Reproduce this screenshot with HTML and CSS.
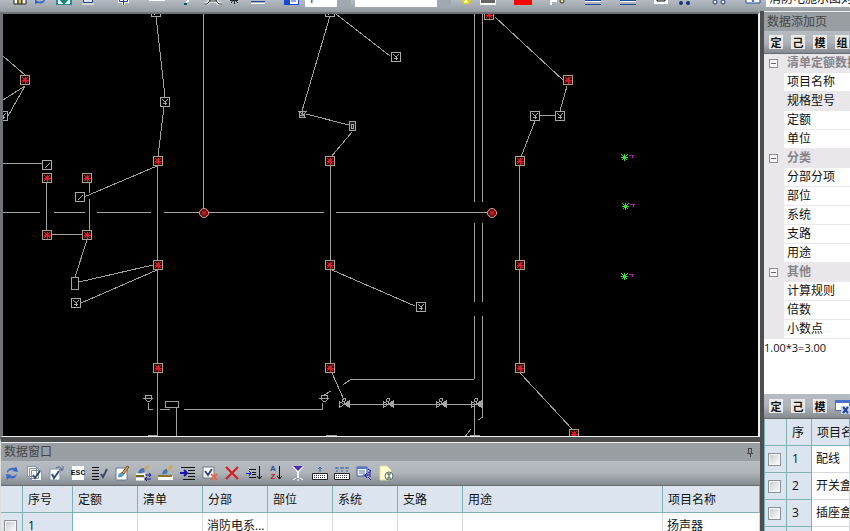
FILE: index.html
```html
<!DOCTYPE html>
<html lang="zh-CN">
<head>
<meta charset="utf-8">
<title>数据窗口</title>
<link rel="stylesheet" href="styles.css">
</head>
<body>
<header class="topbar">
 <div class="ribbon">
  <button aria-label="图库"><svg viewBox="0 0 18 16"><path d="M3 4h4v11H3z" fill="#fff" stroke="#222"/><path d="M7 4h4v11H7z" fill="#e2b64a" stroke="#222"/><path d="M11 4h4v11h-4z" fill="#fff" stroke="#222"/></svg></button>
  <button aria-label="刷新"><svg viewBox="0 0 18 16"><path d="M4 15V9l2 3q5 2 9-3-2 7-8 5z" fill="#3262c4"/></svg></button>
  <button aria-label="导入"><svg viewBox="0 0 18 16"><path d="M2 2h14v14H2z" fill="#e6ffff" stroke="#248d98" stroke-width="2"/><path d="M9 5v8M5 10l4 4 4-4" fill="none" stroke="#13806f" stroke-width="2"/></svg></button>
  <button aria-label="矩形"><svg viewBox="0 0 18 16"><path d="M4.500 3.500h9v10h-9z" fill="#dce6f4" stroke="#244284"/><path d="M3 15h12" stroke="#fff"/></svg></button>
  <button aria-label="中点"><svg viewBox="0 0 18 16"><path d="M5.500 6v6.500h8V6M9.500 4v12" fill="none" stroke="#fff" stroke-width="3"/><path d="M5.500 6v6.500h8V6M9.500 4v12" fill="none" stroke="#244284"/></svg></button>
  <button aria-label="直线"><svg viewBox="0 0 18 16"><path d="M1 11h16" stroke="#fff" stroke-width="2"/></svg></button>
  <button aria-label="帮助"><svg viewBox="0 0 18 16"><path d="M11 5v7l-2 1" stroke="#fff" stroke-width="2" fill="none"/><path d="M7 14h3v2H7z" fill="#174f60"/></svg></button>
  <button aria-label="连接"><svg viewBox="0 0 18 16"><path d="M9 8L3 15H0M9 8l6 7h3M5 12h8" fill="none" stroke="#fff" stroke-width="3"/><path d="M9 8L3 15H0M9 8l6 7h3M5 12h8" fill="none" stroke="#222"/></svg></button>
  <button aria-label="节点"><svg viewBox="0 0 18 16"><path d="M9.500 5v10M6 14l3-4 4 4M5 11.500h8" fill="none" stroke="#222"/></svg></button>
  <button aria-label="线型"><svg viewBox="0 0 18 16"><path d="M2 12.500h14" stroke="#214b95"/><path d="M2 14.500h14" stroke="#fff"/></svg></button>
  <button aria-label="图层"><svg viewBox="0 0 18 16"><path d="M2 0h15v16H2z" fill="#1448dc"/><path d="M8 0h8v15H8z" fill="#fff"/><path d="M9 12h5" stroke="#1448dc"/></svg></button>
  <select class="combo" aria-label="比例"><option>1</option></select>
  <select class="combo combo-wide" aria-label="样式"><option></option></select>
  <button aria-label="灯"><svg viewBox="0 0 18 16"><path d="M5 9q5-5 9 0v4q-5 5-9 0z" fill="#d8cf37"/><path d="M7 13h4M9 9v3" stroke="#fff49b" stroke-width="2"/></svg></button>
  <button aria-label="线宽"><svg viewBox="0 0 18 16"><path d="M1 4h16v12H1z" fill="#fff"/><path d="M2 6h14v8H2z" fill="#666"/></svg></button>
  <button aria-label="颜色"><svg viewBox="0 0 20 16" preserveAspectRatio="none"><path d="M0 0h20v16H0z" fill="#f00"/></svg></button>
  <button aria-label="标注"><svg viewBox="0 0 18 16"><path d="M4 16v-4h5V7" fill="none" stroke="#fff" stroke-width="2"/><circle cx="15" cy="12" r="2" fill="#e5db90" stroke="#332b15"/></svg></button>
  <button aria-label="双线"><svg viewBox="0 0 18 16"><path d="M1 11.500h16M1 15.500h16" stroke="#214b95"/><path d="M1 12.500h16" stroke="#fff"/></svg></button>
  <button aria-label="平行线"><svg viewBox="0 0 18 16"><path d="M1 11.500h16M1 15.500h16" stroke="#214b95"/><path d="M1 12.500h16" stroke="#fff"/></svg></button>
  <button aria-label="框选"><svg viewBox="0 0 18 16"><path d="M2 4h14v11H2z" fill="#fff"/><path d="M5 5h8v7H5z" fill="#ddd" stroke="#111"/></svg></button>
  <button aria-label="阵列"><svg viewBox="0 0 18 16" fill="#fff" stroke="#152f80" stroke-width="2"><circle cx="5" cy="9" r="1"/><circle cx="5" cy="14" r="1"/><circle cx="12" cy="9" r="1"/><circle cx="12" cy="14" r="1"/></svg></button>
  <button aria-label="端点"><svg viewBox="0 0 18 16" fill="#fff" stroke="#152f80"><circle cx="5" cy="13" r="2"/><circle cx="13" cy="13" r="2"/></svg></button>
  <button aria-label="展开"><svg viewBox="0 0 18 16"><path d="M2 3h14v11H2z" fill="#fff" stroke="#234d9b"/><path d="M7 9l2 4 2-4" fill="none" stroke="#234d9b"/></svg></button>
  <select class="combo combo-view" aria-label="图纸"><option>消防电施示图对</option></select>
 </div>
</header>
<div class="workspace">
  <main class="left">
    <section class="canvas" aria-label="图纸">
      <svg viewBox="3 14 755 422" preserveAspectRatio="xMinYMin slice" shape-rendering="crispEdges">
        <defs>
          <g id="star" fill="none"><path d="M-3 .500H4M.5-3V4M-2.500-2.500l6 6M3.500-2.500l-6 6"/></g>
          <g id="red"><path d="M-4.500-4.500h9v9h-9z" fill="#250000" stroke="#aaa593"/><path d="M-2-2h4v4h-4z" fill="#9c1820"/><path d="M-3 .500H4M.5-3V4M-3-3l6 6M3-3l-6 6" stroke="#e21e2b"/></g>
          <g id="ring"><circle r="4.500" fill="#420608" stroke="#d8aaa1"/><path d="M-3 0H3M0-3V3M-3-3l6 6M3-3l-6 6" stroke="#d62027"/></g>
          <g id="ybox" fill="#000" stroke="#aaa"><path d="M-4.500-4.500h9v9h-9z"/><path d="M-3-3L0 0L3-3M0 0v3M-2 1h4" fill="none"/></g>
          <g id="sbox" fill="#000" stroke="#aaa"><path d="M-4.500-4.500h9v9h-9z"/><path d="M-2 3L3-2"/></g>
          <g id="valve" stroke="#a5a5a5" fill="none"><path d="M-4.500-2.500v6L0 .500zM0-2v2"/><path d="M5-3v6L0 0z" fill="#a5a5a5"/><circle cx="0" cy="-4" r="1.500"/></g>
        </defs>
        <g fill="none" stroke="#a2a2a2">
          <path d="M3 56L25 75M25 86L3 100M25 86L8 116M156 16l9 81M164 107l-6 49M157 166L84 197M157.500 166V436M3 163.500h40M46.500 183v47M89.500 183v10M89.500 199v31M51 234.500h31M87 240l-12 37M79 282l74-17M81 303l76-33"/>
          <path d="M3 212.500h37M54 212.500h31M97 212.500h54M164 212.500h160M336 212.500h151M203.500 14v194"/>
          <path d="M330 16l-28 95M336 14l54 42M306 114l43 11M352 132l-21 25M330.500 166V363M332 270l83 36M332 373l12 27M474.500 14v188M482.500 14v188M474.500 223v79M482.500 223v79M474.500 316v63M482.500 316v101l-4 3M474 379.500H351l-8 5M344 404.500h131M474.500 404v32M471 429l-6 8"/>
          <path d="M495 17l68 63M567 86l-7 25M540 115.500h15M535 121l-14 36M519.500 166V363M520 373l53 57"/>
          <path d="M148.500 403v6h4M160 409.500h10M184 409.500h138v-7M324 395l7-4M176.500 408v28M148 435.500h9M326 435.500h11M470 435.500h10"/>
          <path d="M165.500 401.500h13v6h-13zM71.500 277.500h7v12h-7z" fill="#000"/>
          <path d="M145.500 395.500h6v4l-2 2h-2l-2-2zM143 398.500h10M321.500 395.500h6v4l-2 2h-2l-2-2zM319 398.500h10"/>
          <path d="M349.500 121.500h6v9h-6zM351.500 124.500h2v4h-2zM298 111.500h8l-2 3 1 3h-6v-6l6 5-3-4M300 115h5" fill="#222"/>
        </g>
        <use href="#sbox" x="156" y="12"/><use href="#sbox" x="330" y="12"/><use href="#sbox" x="47" y="165"/><use href="#sbox" x="80" y="197"/>
        <use href="#ybox" x="165" y="102"/><use href="#ybox" x="3" y="116"/><use href="#ybox" x="396" y="57"/><use href="#ybox" x="535" y="116"/><use href="#ybox" x="560" y="116"/><use href="#ybox" x="421" y="307"/><use href="#ybox" x="76" y="303"/>
        <use href="#red" x="25" y="80"/><use href="#red" x="158" y="161"/><use href="#red" x="47" y="178"/><use href="#red" x="87" y="178"/><use href="#red" x="47" y="235"/><use href="#red" x="87" y="235"/><use href="#red" x="158" y="265"/><use href="#red" x="158" y="368"/><use href="#red" x="330" y="161"/><use href="#red" x="330" y="265"/><use href="#red" x="330" y="368"/><use href="#red" x="489" y="15"/><use href="#red" x="568" y="80"/><use href="#red" x="520" y="161"/><use href="#red" x="520" y="265"/><use href="#red" x="520" y="368"/><use href="#red" x="574" y="434"/>
        <g shape-rendering="auto"><use href="#ring" x="204" y="213"/><use href="#ring" x="492" y="213"/></g>
        <use href="#valve" x="344" y="404"/><use href="#valve" x="388" y="404"/><use href="#valve" x="441" y="404"/><use href="#valve" x="476" y="404"/>
        <g stroke="#43d84b"><use href="#star" x="624" y="157"/><use href="#star" x="625" y="206"/><use href="#star" x="624" y="276"/></g>
        <path d="M629 155.500h5M632 156v2M630 204.500h5M633 205v2M629 274.500h5M632 275v2" stroke="#a72ba7"/>
      </svg>
    </section>
    <section class="data">
      <h2 class="title">数据窗口<button class="pin" aria-label="固定"><svg viewBox="0 0 8 10"><path d="M2.500 1v5M5.500 1v5M2 1.500h4M1 6.500h6M4.500 7v3" fill="none" stroke="#444"/></svg></button></h2>
      <div class="tools">
        <button aria-label="刷新"><svg viewBox="0 0 16 16"><path d="M3 6q3-4 8-3l1-2 2 6-6-1 2-1Q6 4 3 8zM13 9q-2 6-8 4l-2 2-1-6 6 1-2 1q4 1 7-2z" fill="#3867c8"/></svg></button>
        <button aria-label="全选"><svg viewBox="0 0 16 16"><path d="M1.500 1.500h9v10h-9zM3.500 3.500h9v10h-9zM5.500 5.500h10v10h-10z" fill="#fff" stroke="#8494a8"/><path d="M7 10l2 3 5-7" fill="none" stroke="#374a78" stroke-width="2"/></svg></button>
        <button aria-label="反选"><svg viewBox="0 0 16 16"><path d="M2 4h10v11H2z" fill="#fff" stroke="#8494a8"/><path d="M4 9l2 4 5-7" fill="none" stroke="#374a78" stroke-width="2"/><path d="M8 3q4-3 6 2m-3 0h4V1" fill="none" stroke="#526286"/></svg></button>
        <button class="esc">ESC</button>
        <button aria-label="勾选"><svg viewBox="0 0 16 16"><path d="M0 2.500h7M0 5.500h7M0 8.500h7M0 11.500h7M0 14.500h7" stroke="#111"/><path d="M9 9l2 3 4-8" fill="none" stroke="#3d4a70" stroke-width="2"/></svg></button>
        <button aria-label="编辑"><svg viewBox="0 0 16 16"><path d="M2 3h11v12H2z" fill="#fff" stroke="#68798b"/><path d="M4 12q0-4 4-5l2 2q-1 4-6 3z" fill="#4f9bd6"/><path d="M8 8l5-7 2 1-5 7z" fill="#dca44b" stroke="#765429"/></svg></button>
        <button aria-label="格式刷"><svg viewBox="0 0 16 16"><path d="M0 10h10M0 14h8" stroke="#fff" stroke-width="3"/><path d="M0 11h8" stroke="#765e1b" stroke-width="2"/><path d="M2 8q1-5 6-5l1 2q-1 4-7 3z" fill="#4678bc"/><path d="M8 4l3-4 2 1-4 5z" fill="#dca44b"/><path d="M9 10h6M13 8l2 2-2 2M15 14H9M11 12l-2 2 2 2" fill="none" stroke="#171796"/></svg></button>
        <button aria-label="刷子"><svg viewBox="0 0 16 16"><path d="M0 13h15" stroke="#fff" stroke-width="4"/><path d="M0 11h14" stroke="#8b762b" stroke-width="2"/><path d="M4 9q1-5 5-5l1 2q-1 4-6 3z" fill="#4678bc"/><path d="M9 5l4-5 2 1-5 6z" fill="#dca44b"/></svg></button>
        <button aria-label="缩进"><svg viewBox="0 0 16 16"><path d="M1 2.500h14M8 5.500h7M8 8.500h7M8 11.500h7M3 14.500h12" stroke="#111"/><path d="M0 8h7M4 5l3 3-3 3" fill="none" stroke="#1717ae" stroke-width="2"/></svg></button>
        <button aria-label="取消勾选"><svg viewBox="0 0 16 16"><path d="M1 2h11v11H1z" fill="#fff" stroke="#68798b"/><path d="M3 6l3 4 4-6" fill="none" stroke="#374a78" stroke-width="2"/><path d="M9 9l6 6M15 9l-6 6" stroke="#e66448" stroke-width="2"/></svg></button>
        <button aria-label="删除"><svg viewBox="0 0 16 16"><path d="M2 2l12 12M14 2L2 14" stroke="#d41c1c" stroke-width="2"/></svg></button>
        <button aria-label="插入"><svg viewBox="0 0 16 16"><path d="M3 4.500h7M6 7.500h4M6 9.500h4M3 12.500h7" stroke="#111"/><path d="M0 8.500h5M3 6l2 2-2 3" fill="none" stroke="#1717ae"/><path d="M13.500 1v12M11 11l2.500 3 2.500-3" fill="none" stroke="#111"/></svg></button>
        <button class="sort" aria-label="排序"><span class="az"><b>A</b><i>Z</i></span><svg viewBox="0 0 6 16"><path d="M3.500 1v13M1 11l2.500 3L6 11" fill="none" stroke="#111"/></svg></button>
        <button aria-label="筛选"><svg viewBox="0 0 16 16"><path d="M2 1h12L9 7v6H7V7z" fill="#fff"/><path d="M3 1h10L8 6z" fill="#4b2fa9"/><path d="M3 15l3-2M13 15l-3-2M7 15h2" stroke="#fff"/></svg></button>
        <button aria-label="单列"><svg viewBox="0 0 16 16"><path d="M.5 8.500h15v6H.5z" fill="#fff" stroke="#222"/><path d="M2 10.500h12M2 12.500h12" stroke="#333" stroke-dasharray="1"/><path d="M8 7V2M6 4l2-2 2 2" fill="none" stroke="#2c69a6"/></svg></button>
        <button aria-label="多列"><svg viewBox="0 0 16 16"><path d="M.5 8.500h15v6H.5z" fill="#fff" stroke="#222"/><path d="M2 10.500h12M2 12.500h12" stroke="#333" stroke-dasharray="1"/><path d="M3 7V1M8 7V1M13 7V1M1 3h4M6 3h4M11 3h4" fill="none" stroke="#2c69a6" stroke-dasharray="2 1"/></svg></button>
        <button aria-label="导出"><svg viewBox="0 0 16 16"><path d="M1 2h10v9H1z" fill="#e9f5ff" stroke="#435ba4"/><path d="M1 2h10v2H1z" fill="#5779c8"/><path d="M3 6h6M3 8h6" stroke="#687dac"/><path d="M7 10h7M12 4l3 2-3 2M14 7v5M12 12l3 3M11 8l-2 2 2 3" fill="none" stroke="#2020a0"/></svg></button>
        <button aria-label="信息"><svg viewBox="0 0 16 16"><path d="M2 1h7l4 4v10H2z" fill="#fffcc9" stroke="#dadbb0"/><circle cx="11" cy="11" r="4" fill="#fff" stroke="#526b5d"/><path d="M9 9h4M11 9v4M9 13h4" stroke="#315344"/></svg></button>
      </div>
      <table class="grid">
        <colgroup><col class="c-check"><col class="c-num"><col class="c-std"><col class="c-std"><col class="c-std"><col class="c-std"><col class="c-std"><col class="c-std"><col class="c-use"><col></colgroup>
        <thead><tr><th></th><th>序号</th><th>定额</th><th>清单</th><th>分部</th><th>部位</th><th>系统</th><th>支路</th><th>用途</th><th>项目名称</th></tr></thead>
        <tbody><tr><td class="head"><input type="checkbox" aria-label="选择第1行"></td><td class="head">1</td><td></td><td></td><td>消防电系...</td><td></td><td></td><td></td><td></td><td>扬声器</td></tr></tbody>
      </table>
    </section>
  </main>
  <aside class="side">
    <h2 class="title">数据添加页</h2>
    <div class="tools side-tools"><button><span class="doc">定</span></button><button><span class="doc">己</span></button><button><span class="doc">模</span></button><button><span class="doc">组</span></button></div>
    <ul class="props">
      <li class="group"><button class="fold" aria-label="折叠"></button>清单定额数据</li>
      <li>项目名称</li><li class="selected">规格型号</li><li>定额</li><li>单位</li>
      <li class="group"><button class="fold" aria-label="折叠"></button>分类</li>
      <li>分部分项</li><li>部位</li><li>系统</li><li>支路</li><li>用途</li>
      <li class="group"><button class="fold" aria-label="折叠"></button>其他</li>
      <li>计算规则</li><li>倍数</li><li>小数点</li>
    </ul>
    <div class="formula">1.00*3=3.00</div>
    <div class="tools side-tools"><button><span class="doc">定</span></button><button><span class="doc">己</span></button><button><span class="doc">模</span></button><button aria-label="导出表格"><svg viewBox="0 0 16 16"><path d="M1.500 2.500h14v10h-14z" fill="#fff" stroke="#4c6dbd"/><path d="M1 2h15v3H1z" fill="#4970ca"/><path d="M7 8h9v8H7z" fill="#c6d6f5"/><path d="M9 9l5 6M14 9l-5 6" stroke="#234696" stroke-width="2"/></svg></button></div>
    <table class="grid side-grid">
      <colgroup><col class="s-check"><col class="s-num"><col></colgroup>
      <thead><tr><th></th><th>序</th><th>项目名称</th></tr></thead>
      <tbody>
        <tr><td class="head"><input type="checkbox" aria-label="选择配线"></td><td class="head">1</td><td>配线</td></tr>
        <tr><td class="head"><input type="checkbox" aria-label="选择开关盒"></td><td class="head">2</td><td>开关盒</td></tr>
        <tr><td class="head"><input type="checkbox" aria-label="选择插座盒"></td><td class="head">3</td><td>插座盒</td></tr>
        <tr><td class="head"></td><td class="head"></td><td></td></tr>
      </tbody>
    </table>
  </aside>
</div>
</body>
</html>
```

FILE: styles.css
```css
* { box-sizing: border-box; }
body {
  margin: 0;
  height: 100vh;
  display: flex;
  flex-direction: column;
  overflow: hidden;
  background: #4d4e50;
  color: #111;
  font: 12px/18px "Open Sans", "Noto Sans CJK SC", sans-serif;
}
button { padding: 0; border: 0; background: none; font: inherit; color: inherit; }
svg { display: block; }

/* Only the lower edge of the ribbon is visible above the drawing. */
.topbar {
  flex: 0 0 12px;
  min-height: 0;
  display: flex;
  align-items: flex-end;
  overflow: hidden;
  background: linear-gradient(#b4bbc2, #939ba1);
}
.ribbon {
  flex: 1;
  display: grid;
  grid-template-columns: 20px 24px 24px 35px 34px 29px 27px 21px 24px 33px 23px 50px 102px 22px 35px 33px 37px 35px 33px 24px 34px 34px 22px 1fr;
  align-items: end;
  padding: 0 0 7px 11px;
}
.ribbon button { width: 18px; height: 16px; }
.ribbon svg { width: 18px; height: 16px; }
.combo {
  appearance: none;
  width: 46px;
  height: 20px;
  margin-bottom: -2px;
  padding: 4px 14px 0 3px;
  border: 0;
  border-radius: 0;
  background: linear-gradient(90deg, #a1a8b0, #a1a8b0) right / 14px 100% no-repeat #fff;
  font: 12px/14px "Open Sans", "Noto Sans CJK SC", sans-serif;
  color: #111;
}
.combo-wide { width: 96px; }
.combo-view { width: 100%; padding: 4px 0 0 3px; background: #fff; }

.workspace { flex: 1; min-height: 0; display: flex; }
.left { flex: 1; min-width: 0; display: flex; flex-direction: column; }
.canvas {
  flex: 1;
  min-height: 0;
  overflow: hidden;
  background: #000;
  border: solid #6f7375;
  border-width: 2px 2px 1px 3px;
  border-right-color: #eee;
  border-bottom-color: #eee;
}
.canvas svg { width: 100%; height: 100%; }

.data {
  flex: 0 0 94px;
  overflow: hidden;
  border-top: 5px solid #4d4e50;
  border-left: 1px solid #ddd;
}
.title {
  display: flex;
  align-items: center;
  justify-content: space-between;
  height: 19px;
  margin: 0;
  padding: 0 6px 0 3px;
  border-top: 1px solid #eee;
  background: #989ea2;
  color: #454545;
  font-size: 12px;
  font-weight: 400;
  line-height: 18px;
}
.pin, .pin svg { width: 8px; height: 10px; }
.tools {
  display: flex;
  height: 25px;
  align-items: center;
  overflow: hidden;
  border-bottom: 1px solid #666b70;
  background: linear-gradient(#b7bcc3, #aeb4ba 50%, #858a90);
}
.tools button {
  flex: 0 0 22px;
  height: 20px;
  display: flex;
  align-items: center;
  justify-content: center;
}
.tools svg { width: 16px; height: 16px; }
.tools .esc { font: bold 8px/12px "Liberation Mono", monospace; background: linear-gradient(#fff, #fff) center / 12px 14px no-repeat; }
.tools .sort svg { width: 6px; }
.az { display: flex; flex-direction: column; font: 8px/8px "Liberation Sans", sans-serif; color: #314f91; }
.az i { color: #b42222; font-style: normal; font-weight: 700; }

.grid { width: 100%; border-collapse: separate; border-spacing: 0; table-layout: fixed; background: #fff; }
.grid th, .grid td {
  height: 27px;
  padding: 0 4px;
  border-right: 1px solid #d5d9dc;
  border-bottom: 1px solid #d5d9dc;
  overflow: hidden;
  white-space: nowrap;
  text-align: left;
  font-weight: 400;
}
.grid th, .grid .head { background: #dce5ef; border-color: #7fb2b5; }
.grid th { padding-top: 2px; padding-left: 5px; }
.grid .head { padding-left: 5px; }
.c-check { width: 22px; }
.c-num { width: 50px; }
.c-std { width: 65px; }
.c-use { width: 200px; }
.grid input {
  appearance: none;
  display: block;
  width: 13px;
  height: 13px;
  margin: 0;
  border: 1px solid #8a9095;
  background: linear-gradient(135deg, #c5cbd0, #fff);
  outline: 1px solid #f6f6f6;
  outline-offset: -2px;
}
.data .head:first-child { padding-left: 3px; }

.side {
  flex: 0 0 90px;
  display: flex;
  flex-direction: column;
  overflow: hidden;
  margin-top: -1px;
  border-left: 4px solid #4d4e50;
  background: #fff;
}
.side .title { flex: 0 0 20px; white-space: nowrap; }
.side-tools { flex: 0 0 23px; padding-left: 1px; }
.formula + .side-tools { flex-basis: 25px; }
.doc {
  width: 14px;
  height: 14px;
  border: 1px dotted #eee;
  background: #e7e7e4;
  font: bold 11px/12px "Noto Sans CJK SC", sans-serif;
  display: flex;
  align-items: center;
  justify-content: center;
}
.props { flex: none; margin: 0; padding: 0; list-style: none; }
.props li {
  height: 19px;
  padding-left: 3px;
  overflow: hidden;
  white-space: nowrap;
  border-left: 20px solid #e9e7ea;
  border-bottom: 1px solid #e9e7ea;
}
.props .group {
  display: flex;
  align-items: center;
  gap: 9px;
  padding-left: 5px;
  border-left: 0;
  background: #e9e7ea;
  color: #858387;
  font-weight: 700;
}
.props .selected { background: #e9e7ea; }
.fold {
  flex: none;
  width: 9px;
  height: 9px;
  border: 1px solid #8d8d91;
  background: linear-gradient(#666, #666) center / 5px 1px no-repeat #f6f6f6;
}
.formula { flex: 1; font-size: 11px; line-height: 18px; }
.side-grid { flex: none; border-left: 1px solid #7fb2b5; }
.side-grid tr:last-child td { height: 4px; padding: 0; border-bottom: 0; }
.s-check { width: 22px; }
.s-num { width: 25px; }
.side .head:first-child { padding-left: 3px; }
```
